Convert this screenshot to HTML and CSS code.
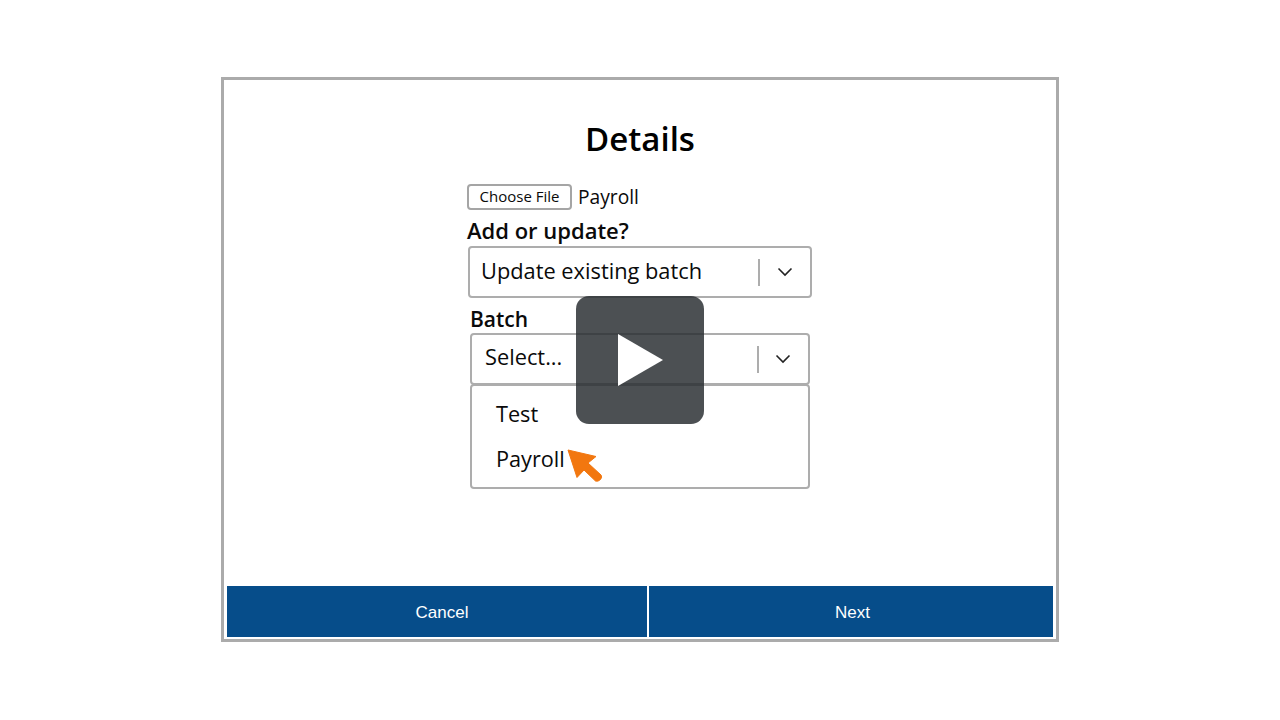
FILE: index.html
```html
<!DOCTYPE html>
<html lang="en">
<head>
<meta charset="utf-8">
<title>Details</title>
<link rel="stylesheet" href="styles.css">
</head>
<body>
<main class="frame">
  <section class="content">
    <h1 class="title">Details</h1>
    <form class="form">
      <div class="file-row">
        <span class="file-btn">Choose File</span>
        <span class="file-name">Payroll</span>
      </div>
      <div class="label label-add">Add or update?</div>
      <div class="select select-first">
        <span class="select-value">Update existing batch</span>
        <span class="sep"></span>
        <svg class="chev" viewBox="0 0 16 10" aria-hidden="true"><path d="M1.5 1.5 8 8l6.500-6.500"/></svg>
      </div>
      <div class="batch">
        <div class="label label-batch">Batch</div>
        <div class="select select-second">
          <span class="select-value">Select...</span>
          <span class="sep"></span>
          <svg class="chev" viewBox="0 0 16 10" aria-hidden="true"><path d="M1.5 1.5 8 8l6.500-6.500"/></svg>
        </div>
        <ul class="menu">
          <li>Test</li>
          <li>Payroll</li>
        </ul>
      </div>
    </form>
  </section>
  <footer class="actions">
    <div class="action action-cancel">Cancel</div>
    <div class="action action-next">Next</div>
  </footer>
  <svg class="cursor" viewBox="0 0 38 36" aria-hidden="true"><path d="M2 2 30 8.500 22 15 35 27Q36.500 29 34.500 31.500 32 34 29.500 33L18 22 11 29.500Z"/></svg>
  <div class="play"><svg class="play-icon" viewBox="0 0 45 52" aria-hidden="true"><path d="M0 0 45 26 0 52Z"/></svg></div>
</main>
</body>
</html>
```
FILE: styles.css
```css
* { box-sizing: border-box; }
html, body { margin: 0; height: 100%; background: #fff; }
body {
  display: flex;
  justify-content: center;
  padding: 77px 0 0 0;
  font-family: "Open Sans", "Liberation Sans", sans-serif;
  color: #0a0a0a;
}
.frame {
  position: relative;
  width: 838px;
  height: 565px;
  border: 3px solid #ababab;
  display: flex;
  flex-direction: column;
}
.content { flex: 1; display: flex; flex-direction: column; align-items: center; }
.title {
  margin: 37px 0 0 0;
  height: 44px;
  font-size: 33px;
  line-height: 44px;
  font-weight: 600;
  color: #000;
}
.form { width: 346px; margin: 23px 0 0 0; display: flex; flex-direction: column; }
.file-row { display: flex; align-items: center; gap: 6px; height: 26px; }
.file-btn {
  width: 105px;
  height: 26px;
  border: 2px solid #a5a5a5;
  border-radius: 4px;
  font-size: 15px;
  line-height: 21px;
  text-align: center;
}
.file-name { font-size: 19.2px; line-height: 26px; }
.label { height: 30px; font-weight: 600; }
.label-add { margin-top: 6px; font-size: 22px; line-height: 28px; }
.label-batch { font-size: 21px; line-height: 32px; }
.select {
  display: flex;
  align-items: center;
  height: 52px;
  border: 2px solid #adadad;
  border-radius: 4px;
  background: #fff;
}
.select-first { margin: 0 1px; padding: 0 17px 0 11px; }
.select-value { flex: 1; font-size: 21.8px; line-height: 30px; padding-bottom: 2px; }
.select-second .select-value { padding-left: 2px; padding-bottom: 4px; }
.select-second { padding: 0 17px 0 11px; }
.select-second .sep { margin-right: 16px; }
.sep { width: 2px; height: 27px; background: #adadad; margin-right: 17px; }
.chev { width: 16px; height: 10px; }
.chev path { fill: none; stroke: #222; stroke-width: 1.6; }
.batch { margin: 5px 3px 0 3px; display: flex; flex-direction: column; }
.menu {
  list-style: none;
  margin: -1px 0 0 0;
  padding: 5px 0 0 24px;
  height: 105px;
  border: 2px solid #adadad;
  border-radius: 4px;
  font-size: 21.7px;
  line-height: 45px;
}
.actions {
  display: grid;
  grid-template-columns: 420px 1fr;
  grid-template-rows: 51px;
  gap: 2px;
  height: 51px;
  margin: 0 3px 2px 3px;
}
.action {
  display: flex;
  align-items: center;
  justify-content: center;
  padding-top: 2px;
  background: #064d8a;
  color: #fff;
  font-family: "Liberation Sans", Arial, sans-serif;
  font-size: 17px;
  line-height: 20px;
}
.action-cancel { padding-left: 10px; }
.action-next { padding-left: 3px; }
.cursor { position: absolute; left: 342px; top: 368px; width: 38px; height: 36px; }
.cursor path { fill: #f2770f; stroke: #f2770f; stroke-width: 1; stroke-linejoin: round; }
.play {
  position: absolute;
  left: 352px;
  top: 216px;
  width: 128px;
  height: 128px;
  border-radius: 13px;
  background: rgba(40, 44, 48, 0.83);
  display: flex;
  align-items: center;
  justify-content: center;
}
.play-icon { width: 45px; height: 52px; }
.play-icon path { fill: #fff; }
```
